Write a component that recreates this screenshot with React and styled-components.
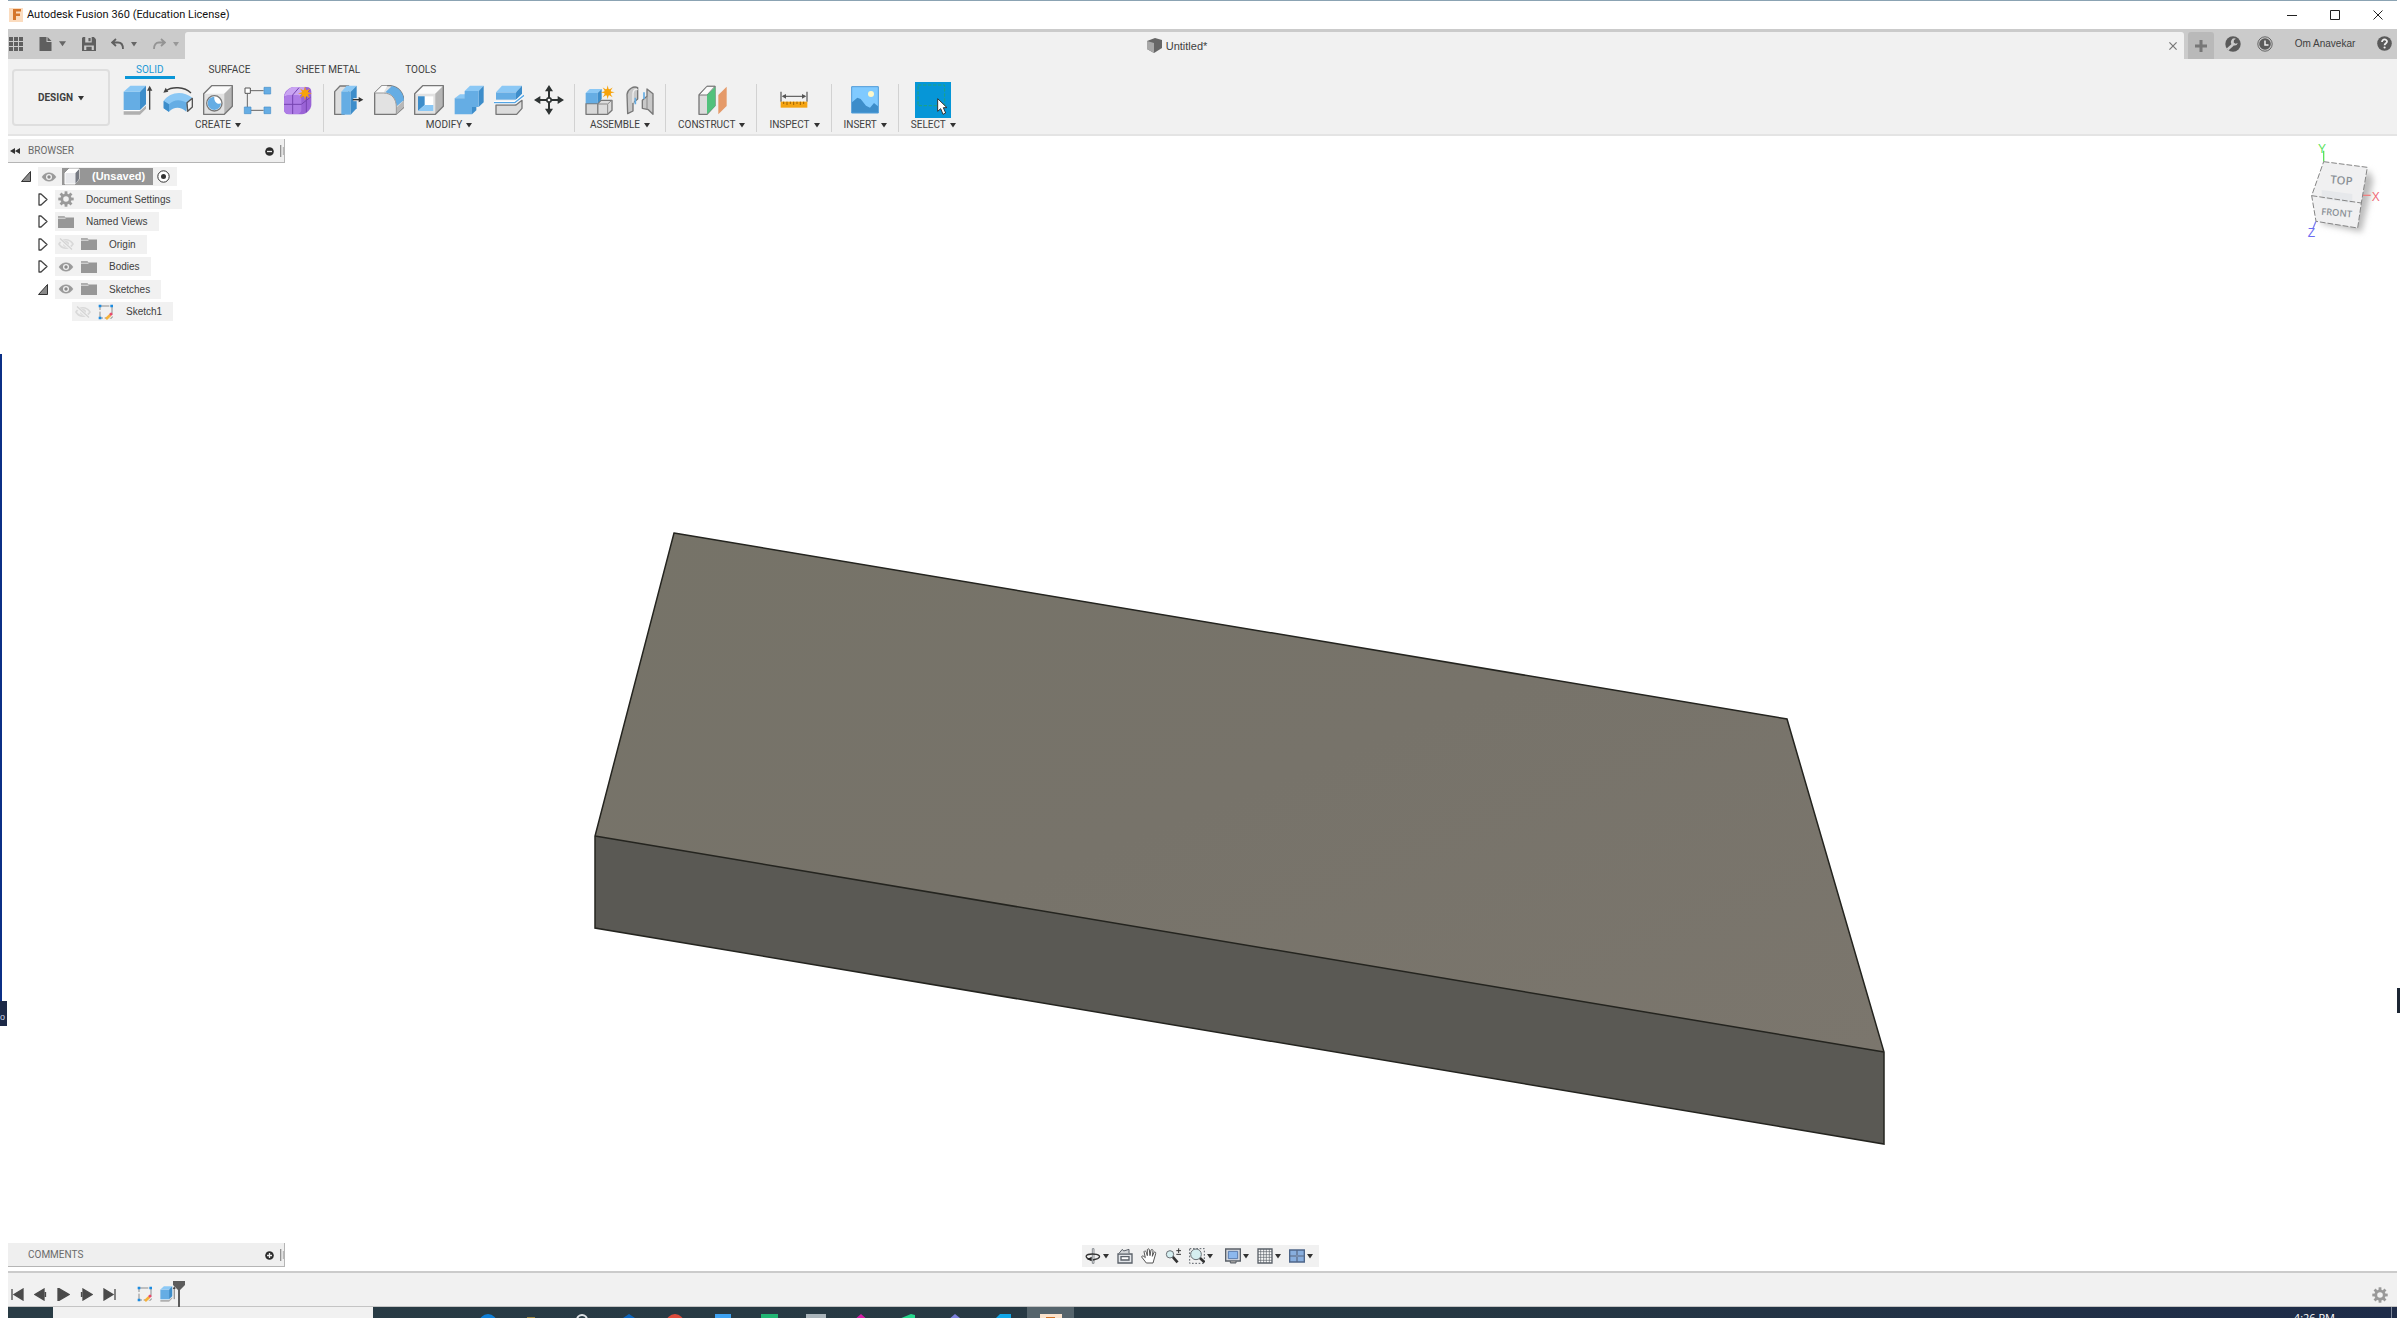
import React from 'react';
import styled, { createGlobalStyle } from 'styled-components';

const GlobalStyle = createGlobalStyle`
* { box-sizing: border-box; }
body {
  margin: 0;
  overflow: hidden;
  background: #fff;
  font-family: "Liberation Sans", Arial, sans-serif;
  font-size: 10px;
  color: #404040;
}
button {
  font: inherit;
  color: inherit;
  background: none;
  border: 0;
  padding: 0;
  margin: 0;
  cursor: pointer;
}
svg { display: block; flex: none; }
`;

const caps = `
font-family: Roboto, "Liberation Sans", sans-serif;
font-size: 10px;
line-height: 14px;
`;

const Page = styled.div`
position: relative;
height: 100vh;
padding: 0 3px 0 8px;
display: flex;
flex-direction: column;
`;

/* ---------- title bar ---------- */

const TitleBar = styled.header`
height: 29px;
border-top: 1px solid #8ba3b3;
display: flex;
align-items: center;
justify-content: space-between;
padding: 0 14px 0 1px;
`;

const AppTitle = styled.h1`
margin: 0;
display: flex;
align-items: center;
gap: 4px;
font-family: Roboto, "Open Sans", sans-serif;
font-size: 11px;
font-weight: 400;
line-height: 16px;
color: #111;
`;

const WindowButtons = styled.div`
display: flex;
gap: 33px;
`;

/* ---------- document tabs ---------- */

const DocBar = styled.div`
height: 30px;
background: #cbcbcb;
display: flex;
padding-top: 3px;
`;

const QuickTools = styled.div`
width: 177px;
display: flex;
align-items: center;
padding: 0 6px 4px 1px;
justify-content: space-between;
`;

const QuickGroup = styled.div`
display: flex;
align-items: center;
gap: 7px;
opacity: ${({ $dim }) => ($dim ? 0.5 : 1)};
`;

const DocTab = styled.div`
flex: 1;
display: flex;
align-items: center;
background: #f1f1f1;
border-radius: 3px 3px 0 0;
padding-right: 7px;
`;

const DocName = styled.div`
flex: 1;
display: flex;
align-items: center;
justify-content: center;
gap: 4px;
font-size: 11px;
line-height: 14px;
`;

const NewTab = styled.button`
width: 26px;
margin-left: 4px;
background: #b9b9b9;
border-radius: 3px 3px 0 0;
display: flex;
align-items: center;
justify-content: center;
`;

const Account = styled.div`
width: 183px;
display: flex;
align-items: center;
gap: 16px;
padding: 0 5px 4px 11px;
`;

const UserName = styled.button`
margin: 0 auto;
white-space: nowrap;
`;

/* ---------- ribbon ---------- */

const Ribbon = styled.div`
height: 77px;
background: #f1f1f1;
border-bottom: 2px solid #e4e4e4;
display: flex;
padding: 4px 0 0 4px;
`;

const DesignButton = styled.button`
&& {
  ${caps}
  width: 98px;
  height: 57px;
  margin-top: 6px;
  border: 2px solid #dedede;
  border-radius: 4px;
  font-weight: 700;
  display: flex;
  align-items: center;
  justify-content: center;
  gap: 5px;
}
`;

const RibbonBody = styled.div`
padding-left: 3px;
`;

const Tabs = styled.nav`
display: flex;
gap: 23px;
padding-left: 12px;
height: 18px;
`;

const Tab = styled.button`
&& {
  ${caps}
  padding: 0 11px;
  height: 16px;
  color: ${({ $active }) => ($active ? '#1a98d5' : '#404040')};
  border-bottom: 3px solid ${({ $active }) => ($active ? '#0a96d7' : 'transparent')};
  line-height: 10px;
}
`;

const Groups = styled.div`
display: flex;
`;

const Group = styled.div`
position: relative;
padding: ${({ $wide }) => ($wide ? '0 5px' : '0 11px 0 12px')};
display: flex;
flex-direction: column;
align-items: center;
border-right: 1px solid ${({ $last }) => ($last ? 'transparent' : '#d2d2d2')};
margin-top: 3px;
height: 48px;
`;

const ToolRow = styled.div`
display: flex;
height: 36px;
`;

const Tool = styled.button`
width: 40px;
height: 31px;
display: flex;
align-items: center;
justify-content: center;
`;

const GroupLabel = styled.button`
&& {
  ${caps}
  display: flex;
  align-items: center;
  gap: 4px;
  white-space: nowrap;
}
`;

/* ---------- canvas ---------- */

const Canvas = styled.main`
position: relative;
flex: 1;
min-height: 0;
display: flex;
flex-direction: column;
justify-content: space-between;
padding: 3px 0 4px;
`;

const Scene = styled.svg`
position: absolute;
inset: 0;
width: 100%;
height: 100%;
`;

const ViewCube = styled.svg`
position: absolute;
top: 0;
right: 0;
`;

const Side = styled.aside`
position: relative;
width: 277px;
`;

const PanelHead = styled.div`
height: 24px;
background: #efefef;
border-right: 1px solid #b5b5b5;
border-bottom: 1px solid #b5b5b5;
display: flex;
align-items: center;
padding: 1px 0 0 2px;
gap: 6px;
`;

const PanelTitle = styled.h2`
${caps}
flex: 1;
margin: 0;
padding-left: 2px;
font-weight: 400;
color: #6a6a6a;
`;

const Spacer = styled.span`
width: 10px;
`;

const Tree = styled.ul`
list-style: none;
margin: 4px 0 0;
padding: 0;
height: 154px;
display: flex;
flex-direction: column;
justify-content: space-between;
`;

const Node = styled.li`
display: flex;
align-items: center;
gap: 7px;
padding-left: ${({ $level }) => 13 + $level * 17}px;
`;

const Chip = styled.div`
height: 19px;
background: #f1f1f1;
display: flex;
align-items: center;
gap: 7px;
padding: 0 ${({ $root }) => ($root ? 7 : 11)}px 0 3px;
`;

const NodeName = styled.span`
display: flex;
align-items: center;
gap: 12px;
line-height: 17px;
${({ $root }) => $root && `
  background: #969696;
  color: #fff;
  font-size: 11px;
  font-weight: 700;
  margin: 0 -3px 0 -2px;
  padding: 0 8px 0 2px;
`}
`;

const Bottom = styled.div`
position: relative;
display: grid;
grid-template-columns: 1fr auto 1fr;
align-items: end;
padding-right: 4px;
`;

const NavBar = styled.div`
width: 237px;
height: 22px;
background: #f1f1f1;
display: flex;
align-items: center;
gap: 8px;
padding: 0 3px;
`;

const NavItem = styled.button`
display: flex;
align-items: center;
gap: 2px;
margin-right: ${({ $gap }) => ($gap ? 4 : 0)}px;
`;

/* ---------- timeline ---------- */

const Timeline = styled.footer`
height: 36px;
background: #f1f1f1;
border-top: 2px solid #cbcbcb;
border-bottom: 1px solid #c4c4c4;
display: flex;
align-items: center;
padding: 10px 9px 0 3px;
`;

const Playback = styled.div`
display: flex;
gap: 10px;
margin-right: 21px;
`;

const Features = styled.div`
flex: 1;
display: flex;
align-items: flex-start;
gap: 7px;
height: 26px;
margin-top: -1px;
padding-top: 5px;
`;

const Marker = styled.svg`
margin: -5px 0 0 -10px;
`;

/* ---------- OS taskbar ---------- */

const Taskbar = styled.div`
height: 11px;
overflow: hidden;
background: linear-gradient(90deg, #293c45 0%, #263843 60%, #1e2c49 100%);
display: flex;
align-items: flex-start;
padding-left: 45px;
`;

const Search = styled.input`
width: 320px;
height: 38px;
border: 0;
background: #f1f1f1;
margin-right: 90px;
`;

const TaskItem = styled.button`
width: 47px;
height: 38px;
display: flex;
justify-content: center;
padding-top: 7px;
background: ${({ $active }) => ($active ? '#55646c' : 'none')};
`;

const Clock = styled.time`
margin-left: auto;
margin-right: 56px;
margin-top: 4px;
color: #fff;
font-family: "Open Sans", "Noto Sans", sans-serif;
font-size: 11px;
line-height: 14px;
`;

const ShowDesktop = styled.span`
width: 6px;
height: 38px;
border-left: 1px solid #7d879a;
`;

/* ---------- slivers of the neighbouring screens ---------- */

const LeftSliver = styled.div`
position: absolute;
left: 0;
top: 354px;
width: 2px;
height: 647px;
background: #0b2f86;
`;

const LeftBadge = styled.div`
position: absolute;
left: 0;
top: 1001px;
width: 7px;
height: 25px;
overflow: hidden;
background: #1c2947;
color: #cfd6e4;
font-size: 9px;
line-height: 32px;
`;

const RightBadge = styled.div`
position: absolute;
right: 0;
top: 988px;
width: 3px;
height: 25px;
background: #1c2633;
`;

/* ---------- small icons ---------- */

const Caret = ({ size = 6, color = '#333' }) => (
  <svg width={size} height={size} viewBox="0 0 6 6">
    <path d="M0 1h6L3 5.400z" fill={color} />
  </svg>
);

const Plus = () => (
  <svg width="14" height="14" viewBox="0 0 14 14">
    <path d="M7 1v12M1 7h12" stroke="#777" strokeWidth="3" />
  </svg>
);

const Cross = ({ size, color, width = 1 }) => (
  <svg width={size} height={size} viewBox="0 0 10 10">
    <path d="M.5.5l9 9M9.500.5l-9 9" stroke={color} strokeWidth={width} />
  </svg>
);

const Gear = ({ size = 16, color = '#999' }) => (
  <svg width={size} height={size} viewBox="-8 -8 16 16" fill="none" stroke={color}>
    <circle r="4.200" strokeWidth="2.800" />
    {[0, 45, 90, 135, 180, 225, 270, 315].map((a) => (
      <path key={a} d="M0-5v-2.700" strokeWidth="2.800" transform={`rotate(${a})`} />
    ))}
  </svg>
);

const Eye = ({ off }) => (
  <svg width="16" height="16" viewBox="0 0 16 16">
    <path
      d="M1 8c3.500-5.600 10.500-5.600 14 0-3.500 5.600-10.500 5.600-14 0z"
      fill={off ? 'none' : '#9a9a9a'}
      stroke={off ? '#d9d9d9' : '#9a9a9a'}
      strokeWidth={off ? 1.600 : 0.5}
    />
    <circle cx="8" cy="8" r="3" fill={off ? '#d9d9d9' : '#f1f1f1'} />
    {!off && <circle cx="8" cy="8" r="1.700" fill="#8a8a8a" />}
    {off && <path d="M2 3.500l12 10" stroke="#f1f1f1" strokeWidth="3" />}
    {off && <path d="M2 2.500l12 11" stroke="#d4d4d4" strokeWidth="1.300" />}
  </svg>
);

const Folder = () => (
  <svg width="16" height="14" viewBox="0 0 16 14">
    <path d="M0 1.200h6.500l1 1.300H16V13H0z" fill="#979797" />
    <path d="M0 3.200h7.500" stroke="#f1f1f1" strokeWidth=".9" />
  </svg>
);

const SketchIcon = () => (
  <svg width="16" height="16" viewBox="0 0 48 48">
    <path d="M6 6h36v36H6z" fill="none" stroke="#8d8d8d" strokeWidth="3" strokeDasharray="28 5" />
    <path d="M28 42l14-13" stroke="#f1f1f1" strokeWidth="12" />
    <path d="M24 45l13-12" stroke="#f5b13a" strokeWidth="8" />
    <path d="M36 33l6-5" stroke="#e8486a" strokeWidth="8" />
    <path d="M2 2h8v8H2zM37 2h8v8h-8zM2 38h8v8H2z" fill="#1b8be0" />
  </svg>
);

const WhiteCube = () => (
  <svg width="16" height="17" viewBox="0 0 16 17">
    <path d="M1 5l4-4h10v10l-4 5H1z" fill="#e8e9ec" stroke="#fff" strokeLinejoin="round" />
    <path d="M11.500 5L15 1v10l-3.500 5z" fill="#767a82" />
    <path d="M1 5l4-4h10l-4 4z" fill="#fff" />
  </svg>
);

const Twisty = ({ open }) => (
  <svg width="10" height="13" viewBox="0 0 10 13">
    {open ? (
      <path d="M9.500 1.500v10H.5z" fill="#8a8a8a" stroke="#333" />
    ) : (
      <path d="M1 1v11l2 0 6-5.500L3 1z" fill="#fff" stroke="#444" strokeWidth="1.300" strokeLinejoin="round" />
    )}
  </svg>
);

const RoundSign = ({ plus }) => (
  <svg width="9" height="9" viewBox="0 0 9 9">
    <circle cx="4.500" cy="4.500" r="4.300" fill="#2c2c2c" />
    <path d={plus ? 'M2 4.500h5M4.500 2v5' : 'M2 4.500h5'} stroke="#eee" strokeWidth="1.300" />
  </svg>
);

const Grip = () => (
  <svg width="4" height="12" viewBox="0 0 4 12">
    <path d="M.7 0v12" stroke="#888" strokeWidth="1.200" />
    <path d="M3.300 2v8" stroke="#aaa" />
  </svg>
);

/* ---------- ribbon icons, drawn on a 90 unit grid ---------- */

const Big = ({ children, size = 30 }) => (
  <svg width={size} height={size} viewBox="0 0 90 90" strokeLinejoin="round">{children}</svg>
);

const GreyBox = () => (
  <g>
    <path d="M2 26L26 2h62v62L64 88H2z" fill="#e2e2e2" />
    <path d="M2 26L26 2h62L64 26z" fill="#fafafa" />
    <path d="M64 26L88 2v62L64 88z" fill="#b5b5b5" />
    <path d="M2 26L26 2h62v62L64 88H2z" fill="none" stroke="#777" strokeWidth="4" />
  </g>
);

const Star = ({ x, y }) => (
  <g transform={`translate(${x} ${y})`} fill="#f7a30a">
    {[0, 45, 90, 135].map((a) => (
      <path key={a} d="M0-21L5 0 0 21-5 0z" transform={`rotate(${a})`} />
    ))}
    <circle r="10" />
  </g>
);

const Extrude = ({ size }) => (
  <Big size={size}>
    <path d="M2 79h48l19-17v9L51 89H2z" fill="#b0b0b0" />
    <path d="M2 76h47l20-18" stroke="#fff" strokeWidth="3" fill="none" />
    <path d="M2 20h49v55H2z" fill="#65ade4" />
    <path d="M2 20L22 2h47L51 20z" fill="#8bc8f5" />
    <path d="M51 20L69 2v56L51 75z" fill="#3d8dca" />
    <path d="M80 74V8" stroke="#444" strokeWidth="4" />
    <path d="M80 2l8 15H72z" fill="#444" />
  </Big>
);

const Revolve = () => (
  <Big>
    <path d="M8 18C26 4 64 4 84 24" fill="none" stroke="#444" strokeWidth="4" />
    <path d="M1 23L8 8l8 12z" fill="#444" />
    <path d="M2 48C20 26 56 24 74 44l-4 36C54 64 32 64 18 80L2 70z" fill="#65ade4" />
    <path d="M2 48C20 20 60 16 88 38L72 54C52 42 34 42 18 58z" fill="#8bc8f5" />
    <path d="M2 48l16 10v23L2 70z" fill="#3d8dca" />
    <path d="M72 53l16-13v26L74 79z" fill="#f5f5f5" stroke="#555" strokeWidth="4" />
  </Big>
);

const Hole = () => (
  <Big>
    <GreyBox />
    <circle cx="34" cy="55" r="23" fill="#fff" stroke="#777" strokeWidth="4" />
    <path d="M34 35a20 20 0 1 0 20 20C42 60 32 48 34 35z" fill="#65ade4" />
  </Big>
);

const PatternIcon = () => (
  <Big>
    <path d="M22 17h40M13 26v42M22 76h40" stroke="#666" strokeWidth="3" />
    <path d="M6 9h16v16H6z" fill="#fff" stroke="#555" strokeWidth="3" />
    <path d="M63 7h20v20H63zM63 66h20v20H63zM4 66h20v20H4z" fill="#65ade4" stroke="#4a90c8" strokeWidth="2" />
  </Big>
);

const Form = () => (
  <Big>
    <path d="M3 34C3 22 18 6 32 6h38c10 0 15 6 15 14v40c0 12-16 28-28 28H18C8 88 3 82 3 74z" fill="#9a63d6" />
    <path d="M3 34C8 20 20 6 32 6h34C62 20 56 30 48 34z" fill="#c9a4f2" />
    <rect x="3" y="30" width="52" height="57" rx="13" fill="#ae7ce6" />
    <path d="M29 30v57M3 58h52l28-22M29 30L48 8M56 36c8-4 16-14 24-20M70 26v56" fill="none" stroke="#7644b0" strokeWidth="3" />
    <Star x={66} y={25} />
  </Big>
);

const PressPull = () => (
  <Big>
    <path d="M2 20L18 3h26v70L30 88H2z" fill="#dedede" stroke="#777" strokeWidth="4" />
    <path d="M22 20L38 2h30L50 20z" fill="#8bc8f5" />
    <path d="M22 20h28v69H22z" fill="#65ade4" />
    <path d="M50 20L68 2v68L50 89z" fill="#3d8dca" />
    <path d="M58 44h22" stroke="#f1f1f1" strokeWidth="9" />
    <path d="M56 44h22" stroke="#333" strokeWidth="4" />
    <path d="M88 44L74 36v16z" fill="#333" />
  </Big>
);

const Fillet = () => (
  <Big>
    <path d="M2 24L24 2h26c24 4 38 22 40 44v20L66 88H2z" fill="#e2e2e2" stroke="#777" strokeWidth="4" />
    <path d="M67 68l23-22v20L67 88z" fill="#b8b8b8" />
    <path d="M2 24L24 2h16L28 24z" fill="#fafafa" />
    <path d="M34 22L54 3c20 4 34 20 36 42L68 64C66 40 54 26 34 22z" fill="#65ade4" />
    <path d="M2 24h26c26 0 39 18 39 42v22" fill="none" stroke="#999" strokeWidth="3" />
  </Big>
);

const Shell = () => (
  <Big>
    <GreyBox />
    <path d="M12 34h46v44H12z" fill="#fff" />
    <path d="M12 34h20v26L12 78z" fill="#3d8dca" />
    <path d="M32 60h26v18H12z" fill="#8bc8f5" />
  </Big>
);

const Combine = () => (
  <Big>
    <path d="M2 40L18 28h16v12zM32 18L48 2h41L74 18z" fill="#8bc8f5" />
    <path d="M74 18L89 2v50L74 66z" fill="#3d8dca" />
    <path d="M2 40h30V18h42v48H54v22H2z" fill="#65ade4" />
    <path d="M54 88V66h13v10z" fill="#3d8dca" />
  </Big>
);

const Split = () => (
  <Big>
    <path d="M6 60h60l18-14v24L68 88H6z" fill="#dcdcdc" stroke="#777" strokeWidth="4" />
    <path d="M6 22h60v22H6z" fill="#65ade4" />
    <path d="M6 22L24 2h60L66 22z" fill="#8bc8f5" />
    <path d="M66 22L84 2v24L66 44z" fill="#3d8dca" />
    <path d="M0 53h62l28-22" fill="none" stroke="#fff" strokeWidth="9" />
    <path d="M0 53h62l28-22" fill="none" stroke="#53a5e4" strokeWidth="4" />
  </Big>
);

const Move = () => (
  <Big>
    <path d="M45 14v62M14 45h62" stroke="#2e3333" strokeWidth="6" />
    <path d="M45 0l12 19H33zM45 90l12-19H33zM0 45l19-12v24zM90 45L71 33v24z" fill="#2e3333" />
    <circle cx="45" cy="45" r="9" fill="#2e3333" />
    <circle cx="45" cy="45" r="4" fill="#fff" />
  </Big>
);

const NewComponent = () => (
  <Big>
    <path d="M3 56h36v32H3z" fill="#d8d8d8" stroke="#777" strokeWidth="4" />
    <path d="M38 56l10-10h33v30L68 88H38z" fill="#dcdcdc" stroke="#777" strokeWidth="4" />
    <path d="M38 56v32M68 58v30M38 57h30l12-11" fill="none" stroke="#888" strokeWidth="3" />
    <path d="M2 24h36v31H2z" fill="#65ade4" />
    <path d="M2 24l12-12h36L38 24z" fill="#8bc8f5" />
    <path d="M38 24l12-12v30L38 55z" fill="#3d8dca" />
    <Star x={68} y={22} />
  </Big>
);

const Joint = () => (
  <Big>
    <path d="M6 28C8 12 26 2 38 8v34L24 54v24L8 86z" fill="#c8c8c8" stroke="#777" strokeWidth="4" />
    <path d="M24 54V24C26 14 30 12 38 14" fill="none" stroke="#eee" strokeWidth="4" />
    <path d="M84 26L66 12v22L52 46v24l18 4 14 14z" fill="#c8c8c8" stroke="#777" strokeWidth="4" />
    <path d="M66 34v40" stroke="#888" strokeWidth="3" />
    <path d="M31 38v20M57 22v20" stroke="#65ade4" strokeWidth="5" />
  </Big>
);

const Plane = () => (
  <Big>
    <path d="M6 30L30 4h24v58L30 88H6z" fill="#dcdcdc" stroke="#777" strokeWidth="4" />
    <path d="M6 30L30 4h24L30 30z" fill="#fafafa" stroke="#777" strokeWidth="3" />
    <path d="M30 30L55 5v58L30 88z" fill="#52c17c" />
    <path d="M64 30L89 5v58L64 88z" fill="#e59a69" />
  </Big>
);

const Measure = () => (
  <Big>
    <path d="M6 20v30M84 20v30M12 34h66" stroke="#666" strokeWidth="4" />
    <path d="M8 34l13-7v14zM82 34l-13-7v14z" fill="#555" />
    <path d="M5 50h80v18H5z" fill="#f5a412" />
    <path d="M14 50v7M24 50v10M34 50v7M44 50v10M54 50v7M64 50v10M74 50v7" stroke="#9d6200" strokeWidth="3" />
  </Big>
);

const Picture = () => (
  <Big>
    <path d="M5 5h80v79H5z" fill="#80caff" stroke="#4f9bd8" strokeWidth="3" />
    <path d="M6 52l16-14 10 4 16 20 12 6 12-14 12 10v19H6z" fill="#3d8dca" />
    <circle cx="63" cy="27" r="9" fill="#fdf8c9" />
  </Big>
);

const SelectIcon = () => (
  <svg width="36" height="36" viewBox="0 0 108 108">
    <path d="M0 0h108v108H0z" fill="#0696d7" />
    <path d="M9 9h80v62H9z" fill="none" stroke="#20a37c" strokeWidth="3" strokeDasharray="10 5" />
    <path d="M68 50v38l9-8 7 17 8-4-7-16h11z" fill="#fff" stroke="#333" strokeWidth="3" />
  </svg>
);

/* ---------- navigation icons ---------- */

const Nav = ({ children }) => (
  <svg width="16" height="16" viewBox="0 0 48 48" fill="none" stroke="#5a6068" strokeWidth="3">{children}</svg>
);

const Orbit = () => (
  <Nav>
    <path d="M22 2v44h5V2z" fill="#eee" strokeWidth="2" />
    <path d="M15 34C-4 28 2 18 22 18s28 8 16 14l-14 4" stroke="#333" strokeWidth="4" />
    <path d="M6 34l14-8v14z" fill="#222" stroke="none" />
  </Nav>
);

const LookAt = () => (
  <Nav>
    <path d="M3 18h42v27H3z" fill="#e3e6ea" strokeWidth="4" />
    <path d="M12 26h24v10H12z" fill="#fff" strokeWidth="4" />
    <path d="M6 16L16 4l4 5 16-5v12" fill="#d4d7da" />
  </Nav>
);

const Hand = () => (
  <Nav>
    <path d="M16 45L2 27c0-5 5-4 11 2L9 11c2-4 6-2 7 2l3 10V5c2-4 6-3 6 1l2 17 3-17c2-3 6-2 6 2l-2 17 5-12c3-3 6 0 5 4l-8 28z" fill="#fff" stroke="#555" />
  </Nav>
);

const Zoom = ({ x = 0, r = 12 }) => (
  <g>
    <path d={`M${18 + r * 0.7 + x} ${18 + r * 0.7}L${34 + r * 0.6 + x} 43`} stroke="#333" strokeWidth="8" />
    <circle cx={18 + x} cy="19" r={r} fill="#d5eef0" stroke="#6a7075" />
  </g>
);

const Monitor = () => (
  <Nav>
    <path d="M2 3h44v36H2z" fill="#d8dbe0" strokeWidth="4" />
    <path d="M10 10h28v22H10z" fill="#8cb8ee" stroke="#587bae" />
    <path d="M16 39v6h17v-6" fill="#999" />
  </Nav>
);

const GridIcon = () => (
  <Nav>
    <path d="M3 3h42v42H3z" fill="#fafafa" strokeWidth="4" />
    <path d="M11 3v42M20 3v42M28 3v42M37 3v42M3 11h42M3 20h42M3 28h42M3 37h42" strokeWidth="2" />
  </Nav>
);

const Viewports = () => (
  <Nav>
    <path d="M2 6h44v36H2z" fill="#88aede" stroke="#4d6589" strokeWidth="4" />
    <path d="M24 6v36M2 24h44" stroke="#4d6589" strokeWidth="5" />
    <path d="M24 8v32M4 24h40" stroke="#dfe9f8" strokeWidth="1" />
  </Nav>
);

const navItems = [
  { name: 'Orbit', icon: <Orbit />, menu: true },
  { name: 'Look at', icon: <LookAt /> },
  { name: 'Pan', icon: <Hand /> },
  { name: 'Zoom', icon: <Nav><Zoom x={-3} r={11} /><path d="M34 8h14M41 1v14M34 19h14" stroke="#333" /></Nav> },
  { name: 'Fit', icon: <Nav><path d="M2 2h44v44H2z" strokeDasharray="5 5" /><Zoom x={3} r={16} /></Nav>, menu: true, gap: true },
  { name: 'Display settings', icon: <Monitor />, menu: true },
  { name: 'Grid and snaps', icon: <GridIcon />, menu: true },
  { name: 'Viewports', icon: <Viewports />, menu: true },
];

const groups = [
  { name: 'CREATE', tools: [['Extrude', <Extrude />], ['Revolve', <Revolve />], ['Hole', <Hole />], ['Pattern', <PatternIcon />], ['Form', <Form />]] },
  { name: 'MODIFY', tools: [['Press pull', <PressPull />], ['Fillet', <Fillet />], ['Shell', <Shell />], ['Combine', <Combine />], ['Split body', <Split />], ['Move', <Move />]] },
  { name: 'ASSEMBLE', tools: [['New component', <NewComponent />], ['Joint', <Joint />]] },
  { name: 'CONSTRUCT', tools: [['Offset plane', <Plane />]] },
  { name: 'INSPECT', tools: [['Measure', <Measure />]] },
  { name: 'INSERT', tools: [['Insert image', <Picture />]] },
  { name: 'SELECT', tools: [['Select', <SelectIcon />]] },
];

const nodes = [
  { name: 'Document Settings', level: 1, icon: <Gear /> },
  { name: 'Named Views', level: 1, icon: <Folder /> },
  { name: 'Origin', level: 1, icon: <Folder />, eye: 'off' },
  { name: 'Bodies', level: 1, icon: <Folder />, eye: 'on' },
  { name: 'Sketches', level: 1, icon: <Folder />, eye: 'on', open: true },
  { name: 'Sketch1', level: 2, icon: <SketchIcon />, eye: 'off', leaf: true },
];

const playback = [
  ['Go to start', 'M1 1v11M12 1L3 6.500 12 12z'],
  ['Step back', 'M10 1L1 6.500 10 12zM11.500 4v5'],
  ['Play', 'M1 0v13l11-6.500z'],
  ['Step forward', 'M3 1l9 5.500L3 12zM1.500 4v5'],
  ['Go to end', 'M12 1v11M1 1l9 5.500L1 12z'],
];

const apps = [
  ['Browser', <circle cx="12" cy="9" r="9" fill="#0f7fd8" />],
  ['Explorer', <path d="M4 3h8v2h7v13H4z" fill="#9a8440" />],
  ['Clip', <circle cx="12" cy="6" r="5" fill="none" stroke="#dfe3e6" strokeWidth="2" />],
  ['Mail', <path d="M12 0l9 6v12H3V6z" fill="#0c66c0" />],
  ['Chrome', <circle cx="11" cy="9" r="9" fill="#dc4a3c" />],
  ['Notes', <path d="M4 0h16v18H4z" fill="#3ea2f2" />],
  ['Sheets', <path d="M3 0h17v18H3z" fill="#21b573" />],
  ['Terminal', <path d="M1 0h20v18H1z" fill="#a9b4ba" />],
  ['Publisher', <path d="M9 0l8 7v11H1V7z" fill="#d31ca5" />],
  ['Messenger', <path d="M0 5l12-5 4 1v17H0z" fill="#25d68c" />],
  ['Teams', <path d="M9 0l5 4 5 2v12H2V6z" fill="#7c80dc" />],
  ['Store', <path d="M7 0h11v18H1V6z" fill="#10a6e8" />],
  ['Fusion 360', <g><path d="M0 0h22v18H0z" fill="#fbe3cc" /><path d="M6 3h9v3H9v12H6z" fill="#cf7226" /></g>],
];

const topFace = 'M666 397L1779 583 1876 916 587 700z';
const outline = 'M666 397L1779 583 1876 916 1876 1008 587 792 587 700z';

const App = () => {
  return (
    <>
      <GlobalStyle />
      <Page>
        <TitleBar>
          <AppTitle>
            <svg width="14" height="14" viewBox="0 0 14 14">
              <path d="M0 0h14v14H0z" fill="#fbdcbf" />
              <path d="M4 1h8v2.500H7v2h4V8H7v4H4z" fill="#d5762c" />
            </svg>
            Autodesk Fusion 360 (Education License)
          </AppTitle>
          <WindowButtons>
            <button aria-label="Minimize">
              <svg width="10" height="10" viewBox="0 0 10 10"><path d="M0 5.500h10" stroke="#222" /></svg>
            </button>
            <button aria-label="Maximize">
              <svg width="10" height="10" viewBox="0 0 10 10"><path d="M.5.5h9v9h-9z" fill="none" stroke="#222" /></svg>
            </button>
            <button aria-label="Close"><Cross size={10} color="#222" /></button>
          </WindowButtons>
        </TitleBar>

        <DocBar>
          <QuickTools>
            <button aria-label="Data panel">
              <svg width="14" height="14" viewBox="0 0 14 14" fill="#5f5f5f">
                <path d="M0 0h4v4H0zM5 0h4v4H5zM10 0h4v4h-4zM0 5h4v4H0zM5 5h4v4H5zM10 5h4v4h-4zM0 10h4v4H0zM5 10h4v4H5zM10 10h4v4h-4z" />
              </svg>
            </button>
            <QuickGroup as="button" aria-label="File">
              <svg width="13" height="14" viewBox="0 0 12 14"><path d="M0 0h7v5h5v9H0z" fill="#5f5f5f" /><path d="M8 0l4 4H8z" fill="#5f5f5f" /></svg>
              <Caret size={7} color="#666" />
            </QuickGroup>
            <button aria-label="Save">
              <svg width="14" height="14" viewBox="0 0 13 13">
                <path d="M1 0h10l2 2v11H0V1z" fill="#5f5f5f" />
                <path d="M3 0h6v5H3zM2 8h9v4H2z" fill="#cbcbcb" />
                <path d="M6 1h2v3H6zM4 9h5v3H4z" fill="#5f5f5f" />
              </svg>
            </button>
            <QuickGroup as="button" aria-label="Undo">
              <svg width="13" height="12" viewBox="0 0 13 12"><path d="M5 1L1 4.500 5 8M1 4.500h6c3 0 5 2 5 6.500" fill="none" stroke="#5f5f5f" strokeWidth="1.800" /></svg>
              <Caret color="#666" />
            </QuickGroup>
            <QuickGroup as="button" aria-label="Redo" $dim>
              <svg width="13" height="12" viewBox="0 0 13 12"><path d="M8 1l4 3.500L8 8M12 4.500H6c-3 0-5 2-5 6.500" fill="none" stroke="#5f5f5f" strokeWidth="1.800" /></svg>
              <Caret color="#666" />
            </QuickGroup>
          </QuickTools>
          <DocTab>
            <DocName>
              <svg width="15" height="15" viewBox="0 0 15 15">
                <path d="M0 3l8-3 7 2v8l-8 5-7-4z" fill="#666" />
                <path d="M0 3l7 2v10l-7-4z" fill="#a8a8a8" />
              </svg>
              Untitled*
            </DocName>
            <button aria-label="Close document"><Cross size={8} color="#777" width={1.500} /></button>
          </DocTab>
          <NewTab aria-label="New document"><Plus /></NewTab>
          <Account>
            <button aria-label="Extensions">
              <svg width="16" height="16" viewBox="0 0 16 16">
                <circle cx="8" cy="8" r="7.700" fill="#5a5a5a" />
                <path d="M2.500 13.500L8 8.500" stroke="#cbcbcb" strokeWidth="2.600" />
                <path d="M11 2.800A3.500 3.500 0 1 0 12.800 7l-2.300.8L8.700 6.500 9 4z" fill="#cbcbcb" />
              </svg>
            </button>
            <button aria-label="Job status">
              <svg width="16" height="16" viewBox="0 0 16 16" fill="none">
                <circle cx="8" cy="8" r="7.200" stroke="#666" />
                <circle cx="8" cy="8" r="5.800" fill="#5a5a5a" />
                <path d="M8 4.500V9h3.500" stroke="#eee" strokeWidth="1.500" />
              </svg>
            </button>
            <UserName>Om Anavekar</UserName>
            <button aria-label="Help">
              <svg width="15" height="15" viewBox="0 0 15 15" fill="none">
                <circle cx="7.500" cy="7.500" r="7.300" fill="#5a5a5a" />
                <path d="M5 6C5 2.500 10.200 2.800 10 5.800 9.900 7.200 7.600 7.300 7.600 9.200" stroke="#eee" strokeWidth="1.800" />
                <circle cx="7.600" cy="11.500" r="1.100" fill="#eee" />
              </svg>
            </button>
          </Account>
        </DocBar>

        <Ribbon>
          <DesignButton>DESIGN <Caret /></DesignButton>
          <RibbonBody>
            <Tabs>
              <Tab $active>SOLID</Tab>
              <Tab>SURFACE</Tab>
              <Tab>SHEET METAL</Tab>
              <Tab>TOOLS</Tab>
            </Tabs>
            <Groups>
              {groups.map((g) => (
                <Group key={g.name} $wide={g.tools.length > 1} $last={g.name === 'SELECT'}>
                  <ToolRow>
                    {g.tools.map(([name, icon]) => (
                      <Tool key={name} aria-label={name}>{icon}</Tool>
                    ))}
                  </ToolRow>
                  <GroupLabel>{g.name} <Caret /></GroupLabel>
                </Group>
              ))}
            </Groups>
          </RibbonBody>
        </Ribbon>

        <Canvas>
          <Scene viewBox="0 0 2389 1135">
            <defs>
              <linearGradient id="top" x1="0" y1="0" x2="1" y2="1">
                <stop offset="0" stopColor="#767368" />
                <stop offset=".5" stopColor="#77736a" />
                <stop offset="1" stopColor="#7b766d" />
              </linearGradient>
            </defs>
            <path d={outline} fill="#5a5954" />
            <path d={topFace} fill="url(#top)" />
            <path d={`${outline}M587 700L1876 916`} fill="none" stroke="#24241f" strokeWidth="1.500" />
          </Scene>
          <ViewCube width="107" height="115" viewBox="0 18 321 345">
            <defs>
              <filter id="soft" x="-30%" y="-30%" width="160%" height="160%"><feGaussianBlur stdDeviation="9" /></filter>
            </defs>
            <path d="M90 280L215 306 250 150 235 120z" fill="#bbb" filter="url(#soft)" />
            <path d="M101 95V62" stroke="#5be35b" strokeWidth="4" />
            <path d="M218 196h24" stroke="#f08080" strokeWidth="4" />
            <path d="M78 274L68 298" stroke="#8080f0" strokeWidth="4" />
            <path d="M101 95L232 112 214 219 203 294 78 274 65 197z" fill="#f0f0f1" />
            <path d="M95 180l92 12v28l-92-14z" fill="#e6e8eb" />
            <path d="M101 95L232 112 214 219 203 294 78 274 65 197zM65 197L214 219" fill="none" stroke="#858585" strokeWidth="3" strokeDasharray="17 6" />
            <g fontFamily="Open Sans, sans-serif" fontWeight="600" fill="#8b9096" textAnchor="middle">
              <text fontSize="34" transform="translate(153 163) rotate(5)">TOP</text>
              <text fontSize="28" transform="translate(139 258) rotate(5)">FRONT</text>
            </g>
            <g fontFamily="Liberation Sans, sans-serif" fontSize="36" textAnchor="middle">
              <text x="96" y="69" fill="#5be35b">Y</text>
              <text x="257" y="212" fill="#f06c78">X</text>
              <text x="64" y="322" fill="#6c6cf0">Z</text>
            </g>
          </ViewCube>

          <Side>
            <PanelHead>
              <button aria-label="Collapse browser">
                <svg width="10" height="8" viewBox="0 0 10 8"><path d="M5 1v6L0 4zM10 1v6L5 4z" fill="#333" /></svg>
              </button>
              <PanelTitle>BROWSER</PanelTitle>
              <button aria-label="Minimize browser"><RoundSign /></button>
              <Grip />
            </PanelHead>
            <Tree>
              <Node $level={0}>
                <button aria-label="Collapse (Unsaved)"><Twisty open /></button>
                <Chip $root>
                  <button aria-label="Toggle visibility"><Eye /></button>
                  <NodeName $root><WhiteCube />(Unsaved)</NodeName>
                  <button aria-label="Activate">
                    <svg width="13" height="13" viewBox="0 0 13 13">
                      <circle cx="6.500" cy="6.500" r="5.700" fill="#fff" stroke="#333" />
                      <circle cx="6.500" cy="6.500" r="2.500" fill="#333" />
                    </svg>
                  </button>
                </Chip>
              </Node>
              {nodes.map((n) => (
                <Node key={n.name} $level={n.level}>
                  {n.leaf ? <Spacer /> : <button aria-label={`Toggle ${n.name}`}><Twisty open={n.open} /></button>}
                  <Chip>
                    {n.eye && <button aria-label={`Show ${n.name}`}><Eye off={n.eye === 'off'} /></button>}
                    <NodeName>{n.icon}{n.name}</NodeName>
                  </Chip>
                </Node>
              ))}
            </Tree>
          </Side>

          <Bottom>
            <Side>
              <PanelHead>
                <Spacer />
                <PanelTitle>COMMENTS</PanelTitle>
                <button aria-label="Add comment"><RoundSign plus /></button>
                <Grip />
              </PanelHead>
            </Side>
            <NavBar>
              {navItems.map((item) => (
                <NavItem key={item.name} aria-label={item.name} $gap={item.gap}>
                  {item.icon}
                  {item.menu && <Caret />}
                </NavItem>
              ))}
            </NavBar>
          </Bottom>
        </Canvas>

        <Timeline>
          <Playback>
            {playback.map(([name, d]) => (
              <button key={name} aria-label={name}>
                <svg width="13" height="13" viewBox="0 0 13 13"><path d={d} fill="#4a4a4a" stroke="#4a4a4a" strokeWidth="1.300" /></svg>
              </button>
            ))}
          </Playback>
          <Features>
            <button aria-label="Sketch feature"><SketchIcon /></button>
            <button aria-label="Extrude feature"><Extrude size={16} /></button>
            <Marker width="12" height="26" viewBox="0 0 12 26">
              <path d="M0 0h12v4L7 9v17H5V9L0 4z" fill="#5c5c5c" />
            </Marker>
          </Features>
          <button aria-label="Timeline settings"><Gear /></button>
        </Timeline>

        <Taskbar>
          <Search aria-label="Search" />
          {apps.map(([name, icon]) => (
            <TaskItem key={name} aria-label={name} $active={name === 'Fusion 360'}>
              <svg width="22" height="18" viewBox="0 0 22 18">{icon}</svg>
            </TaskItem>
          ))}
          <Clock>4:26 PM</Clock>
          <ShowDesktop />
        </Taskbar>

        <LeftSliver />
        <LeftBadge>o</LeftBadge>
        <RightBadge />
      </Page>
    </>
  );
};

export default App;
